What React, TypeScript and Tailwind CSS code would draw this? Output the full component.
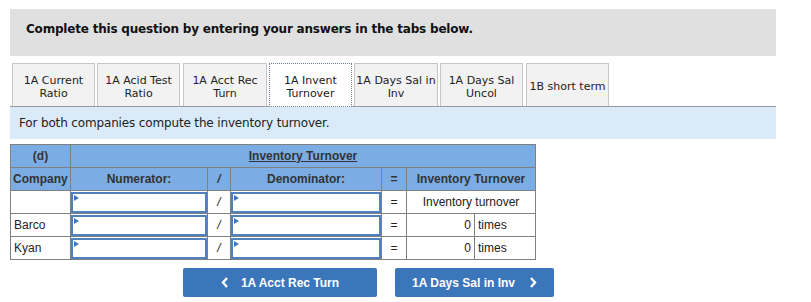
import React from "react";

const tabs = [
  { l1: "1A Current", l2: "Ratio", w: "w-[83px]", ml: "" },
  { l1: "1A Acid Test", l2: "Ratio", w: "w-[83px]", ml: "ml-[2px]" },
  { l1: "1A Acct Rec", l2: "Turn", w: "w-[84px]", ml: "ml-[3px]" },
  { l1: "1A Invent", l2: "Turnover", w: "w-[83px]", ml: "ml-[2px]", active: true },
  { l1: "1A Days Sal in", l2: "Inv", w: "w-[84px]", ml: "ml-[2px]" },
  { l1: "1A Days Sal", l2: "Uncol", w: "w-[83px]", ml: "ml-[2px]" },
  { l1: "1B short term", l2: "", w: "w-[83px]", ml: "ml-[3px]" },
];

function Marker() {
  return (
    <svg className="absolute left-[1px] top-[1px]" width="5" height="6" viewBox="0 0 5 6">
      <polygon points="0,0 5,3 0,6" fill="#3c78c3" />
    </svg>
  );
}

function InputCell() {
  return (
    <td className="border border-[#808080] p-0 h-[23px]">
      <div className="relative h-[21px] border-2 border-[#4f81bd] bg-white">
        <Marker />
      </div>
    </td>
  );
}

const cell = "border border-[#808080] h-[23px] p-0";

function Row({ name, result }: { name: string; result?: string }) {
  return (
    <tr>
      <td className={`${cell} pl-[3px] text-left`}>{name}</td>
      <InputCell />
      <td className={`${cell} text-center italic`}>/</td>
      <InputCell />
      <td className={`${cell} text-center`}>=</td>
      {result === undefined ? (
        <td colSpan={2} className={`${cell} text-center`}>Inventory turnover</td>
      ) : (
        <>
          <td className={`${cell} text-right pr-[3px]`}>{result}</td>
          <td className={`${cell} text-left pl-[3px]`}>times</td>
        </>
      )}
    </tr>
  );
}

export default function App() {
  return (
    <div className="w-[811px] h-[302px] bg-white relative overflow-hidden">
      <div className="pt-[9px] pl-[10px]">
        <div className="w-[766px] h-[47px] bg-[#e0e0e0] pl-[16px] pt-[12px] text-[12px] tracking-[-0.2px] font-bold text-[#111] [font-family:'DejaVu_Sans',Verdana,sans-serif] leading-[16px]">
          Complete this question by entering your answers in the tabs below.
        </div>
      </div>

      <div className="pl-[12px] pt-[7px] flex items-start [font-family:'DejaVu_Sans',Verdana,sans-serif] text-[11px] text-[#222] leading-[13px]">
        {tabs.map((t, i) => (
          <div
            key={i}
            className={`${t.w} ${t.ml} flex flex-col items-center justify-center text-center relative pt-[3px] ${
              t.active
                ? "h-[44px] bg-white border border-dotted border-[#6b7f99] z-10"
                : "h-[43px] bg-[#f2f2f2] border border-b-0 border-[#c6c6c6]"
            }`}
          >
            <span>{t.l1}</span>
            {t.l2 && <span>{t.l2}</span>}
          </div>
        ))}
      </div>

      <div className="ml-[10px] w-[766px] mt-[-1px] border-t border-[#9a9a9a] bg-[#dbeaf9] h-[33px] pl-[9px] pt-[8px] text-[12px] tracking-[-0.15px] text-[#222] leading-[16px] [font-family:'DejaVu_Sans',Verdana,sans-serif]">
        For both companies compute the inventory turnover.
      </div>

      <div className="ml-[10px] mt-[5px]">
        <table className="border-collapse text-[12px] text-[#222] [font-family:'Liberation_Sans',Arial,sans-serif] leading-[14px]">
          <colgroup>
            <col className="w-[60px]" />
            <col className="w-[137px]" />
            <col className="w-[23px]" />
            <col className="w-[151px]" />
            <col className="w-[25px]" />
            <col className="w-[68px]" />
            <col className="w-[61px]" />
          </colgroup>
          <tbody>
            <tr className="bg-[#7badE4] font-bold text-[#333]">
              <td className={`${cell} text-center`}>(d)</td>
              <td colSpan={6} className={`${cell} text-center`}>
                <span className="underline">Inventory Turnover</span>
              </td>
            </tr>
            <tr className="bg-[#7badE4] font-bold text-[#333]">
              <td className={`${cell} text-left pl-[2px]`}>Company</td>
              <td className={`${cell} text-center`}>Numerator:</td>
              <td className={`${cell} text-center italic`}>/</td>
              <td className={`${cell} text-center`}>Denominator:</td>
              <td className={`${cell} text-center`}>=</td>
              <td colSpan={2} className={`${cell} text-center`}>Inventory Turnover</td>
            </tr>
            <Row name="" />
            <Row name="Barco" result="0" />
            <Row name="Kyan" result="0" />
          </tbody>
        </table>
      </div>

      <div className="pl-[183px] mt-[8px] flex gap-[18px] [font-family:'Liberation_Sans',Arial,sans-serif] text-[12px] font-bold text-white">
        <button className="w-[194px] h-[29px] bg-[#3b76bb] rounded-[2px] flex items-center justify-center gap-[12px]">
          <svg width="8" height="11" viewBox="0 0 8 11">
            <polyline points="6,1 2,5.5 6,10" fill="none" stroke="white" strokeWidth="2.4" />
          </svg>
          <span>1A Acct Rec Turn</span>
        </button>
        <button className="w-[159px] h-[29px] bg-[#3b76bb] rounded-[2px] flex items-center justify-center gap-[14px]">
          <span>1A Days Sal in Inv</span>
          <svg width="8" height="11" viewBox="0 0 8 11">
            <polyline points="2,1 6,5.5 2,10" fill="none" stroke="white" strokeWidth="2.4" />
          </svg>
        </button>
      </div>
    </div>
  );
}
